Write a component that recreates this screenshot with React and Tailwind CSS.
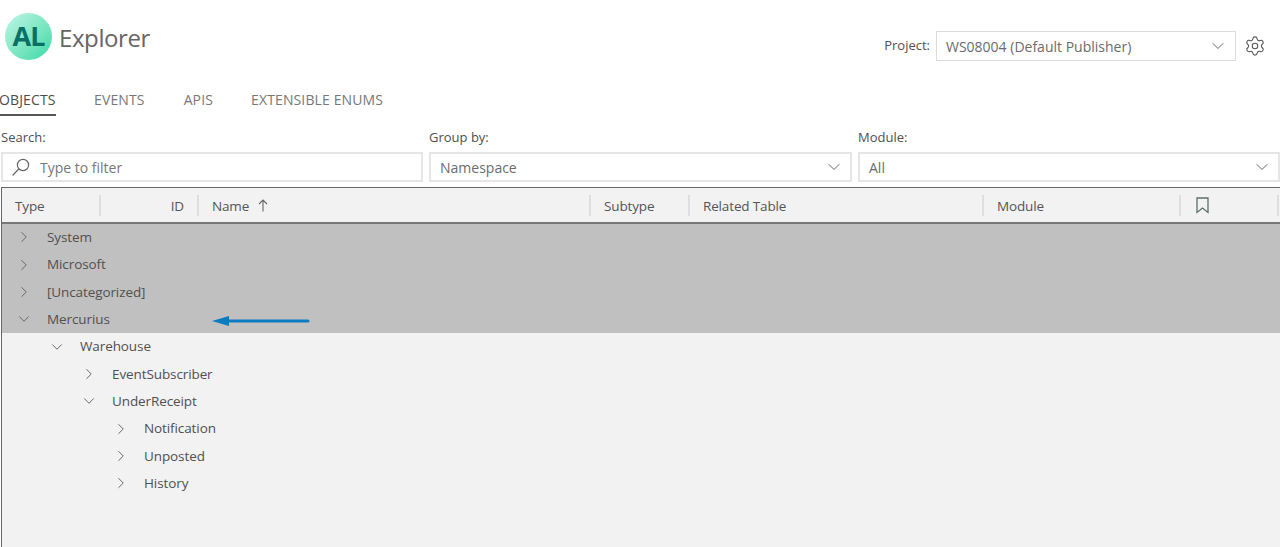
import { ChevronDown, ChevronRight, Settings } from "lucide-react";

const font = "font-['Open_Sans','Noto_Sans',sans-serif]";

function Selectbox({ label, value, className }) {
  return (
    <div className={className}>
      <p className="h-[20px] text-[13px] leading-[20px] font-medium text-[#4f4f4f]">{label}</p>
      <div className="mt-[5px] flex h-[30px] items-center justify-between border-2 border-[#e6e6e6] bg-white pl-[9px] pr-[6px]">
        <span className="text-[14px] text-[#6b6b6b]">{value}</span>
        <ChevronDown className="h-[20px] w-[20px] text-[#666]" strokeWidth={1.2} />
      </div>
    </div>
  );
}

function Col({ label, className, children }) {
  return (
    <div className={`flex h-[21px] items-center border-r-2 border-[#dedede] ${className}`}>
      {label && <span className="mt-[1px] text-[13.5px] font-medium tracking-[-0.15px] text-[#555]">{label}</span>}
      {children}
    </div>
  );
}

function Row({ label, depth = 0, open }) {
  const pads = ["pl-[13px]", "pl-[46px]", "pl-[78px]", "pl-[110px]"];
  const Icon = open ? ChevronDown : ChevronRight;
  return (
    <div className={`flex h-[27.33px] items-center ${pads[depth]}`}>
      <Icon className="h-[18px] w-[18px] shrink-0 text-[#666]" strokeWidth={1.3} />
      <span className="ml-[14px] text-[13.5px] font-medium tracking-[-0.1px] text-[#505050]">{label}</span>
    </div>
  );
}

export default function App() {
  return (
    <div className={`h-[547px] w-[1280px] overflow-hidden bg-white ${font}`}>
      <div className="flex h-[86px] items-start justify-between">
        <div className="ml-[5px] mt-[13px] flex items-center">
          <div className="flex h-[47px] w-[47px] items-center justify-center rounded-full bg-gradient-to-br from-[#bdf6e6] to-[#25d8a6]">
            <span className="text-[27px] font-bold tracking-[-1px] text-[#0a6f64]">AL</span>
          </div>
          <span className="ml-[7px] mt-[3px] text-[24px] tracking-[-0.4px] text-[#666]">Explorer</span>
        </div>
        <div className="mr-[14px] mt-[31px] flex items-center">
          <span className="text-[13px] font-medium text-[#4f4f4f]">Project:</span>
          <div className="ml-[6px] flex h-[30px] w-[300px] items-center justify-between border border-[#dcdcdc] pl-[9px] pr-[7px]">
            <span className="text-[14px] text-[#6b6b6b]">WS08004 (Default Publisher)</span>
            <ChevronDown className="h-[20px] w-[20px] text-[#666]" strokeWidth={1.2} />
          </div>
          <Settings className="ml-[8px] h-[22px] w-[22px] text-[#555]" strokeWidth={1.2} />
        </div>
      </div>

      <div className="flex h-[30px] items-start text-[14px] tracking-[0.13px] text-[#777]">
        <div className="ml-[-1px] h-[30px] w-[57px] border-b-2 border-[#555] pt-[3px] text-[#4d4d4d]">OBJECTS</div>
        <div className="ml-[38px] pt-[3px]">EVENTS</div>
        <div className="ml-[39px] pt-[3px]">APIS</div>
        <div className="ml-[38px] pt-[3px]">EXTENSIBLE ENUMS</div>
      </div>

      <div className="mt-[11px] flex gap-[6px] pl-[1px]">
        <div className="w-[422px]">
          <p className="h-[20px] text-[13px] leading-[20px] font-medium text-[#4f4f4f]">Search:</p>
          <div className="mt-[5px] flex h-[30px] items-center border-2 border-[#e6e6e6] bg-white pl-[9px]">
            <svg width="18" height="18" viewBox="0 0 18 18" fill="none" stroke="#666" strokeWidth="1.2" strokeLinecap="round">
              <circle cx="11" cy="7" r="5.6" />
              <path d="M6.8 11L1 17" />
            </svg>
            <span className="ml-[10px] text-[14px] text-[#777]">Type to filter</span>
          </div>
        </div>
        <Selectbox label="Group by:" value="Namespace" className="w-[423px]" />
        <Selectbox label="Module:" value="All" className="w-[422px]" />
      </div>

      <div className="ml-[1px] mt-[5px] h-[400px] border-t border-l border-[#666] bg-[#f2f2f2]">
        <div className="flex h-[35.6px] items-center border-b-2 border-[#777] pt-[1px]">
          <Col label="Type" className="w-[99px] pl-[13px]" />
          <Col label="ID" className="w-[98px] justify-end pr-[13px]" />
          <Col className="w-[392px] pl-[13px]">
            <span className="mt-[1px] text-[13.5px] font-medium tracking-[-0.15px] text-[#555]">Name</span>
            <svg className="ml-[9px]" width="10" height="13" viewBox="0 0 10 13" fill="none" stroke="#666" strokeWidth="1.1">
              <path d="M5 1V12.5M1 5L5 1L9 5" />
            </svg>
          </Col>
          <Col label="Subtype" className="w-[99px] pl-[13px]" />
          <Col label="Related Table" className="w-[294px] pl-[13px]" />
          <Col label="Module" className="w-[197px] pl-[13px]" />
          <Col className="w-[98px] pl-[15px]">
            <svg width="13" height="17" viewBox="0 0 13 17" fill="none" stroke="#5d6f6a" strokeWidth="1.3">
              <path d="M1 1H12V15.5L6.5 11L1 15.5Z" />
            </svg>
          </Col>
        </div>

        <div className="relative bg-[#c0c0c0]">
          <Row label="System" />
          <Row label="Microsoft" />
          <Row label="[Uncategorized]" />
          <Row label="Mercurius" open />
          {/* annotation arrow sits on top of the tree */}
          <svg className="absolute left-[209px] top-[90.4px]" width="100" height="14" viewBox="0 0 100 14">
            <path d="M16 7H97" stroke="#0a7cc0" strokeWidth="3" strokeLinecap="round" />
            <path d="M1 7L18 2V12Z" fill="#0a7cc0" />
          </svg>
        </div>

        <Row label="Warehouse" depth={1} open />
        <Row label="EventSubscriber" depth={2} />
        <Row label="UnderReceipt" depth={2} open />
        <Row label="Notification" depth={3} />
        <Row label="Unposted" depth={3} />
        <Row label="History" depth={3} />
      </div>
    </div>
  );
}
